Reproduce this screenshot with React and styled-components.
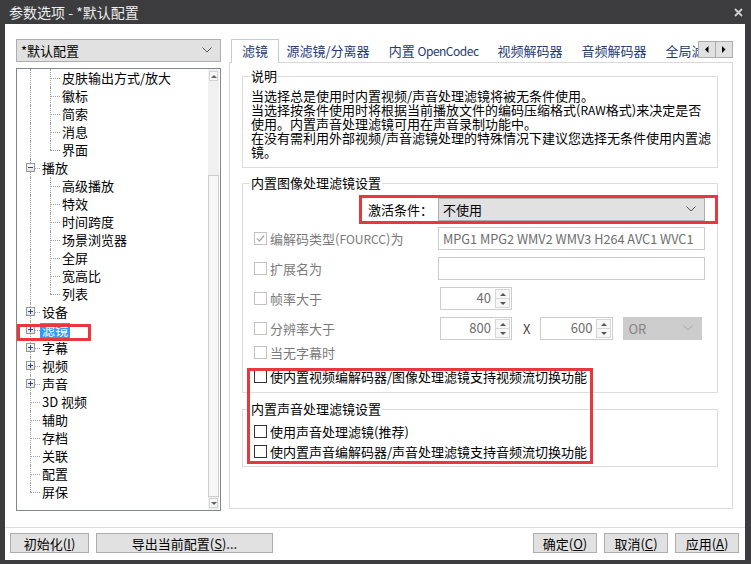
import React from "react";
import styled, { createGlobalStyle } from "styled-components";

const GlobalStyle = createGlobalStyle`
  * { box-sizing: border-box; }
  html, body { margin: 0; padding: 0; background: #3c3c3f; }
  body {
    font-family: "Noto Sans CJK SC", "Noto Sans", sans-serif;
    font-size: 13px;
    color: #000;
  }
`;

const RED = "#e8383d";

const Frame = styled.div`
  width: 751px;
  height: 564px;
  display: flex;
  flex-direction: column;
  background: #3c3c3f;
  padding: 0 6px 4px 5px;
`;

const TitleBar = styled.div`
  flex: none;
  height: 24px;
  margin: 0 -6px 0 -5px;
  padding: 0 8px 0 9px;
  display: flex;
  align-items: center;
  justify-content: space-between;
  color: #ededed;
  font-size: 14px;
  line-height: 22px;
`;

const Client = styled.div`
  flex: 1;
  display: flex;
  flex-direction: column;
  background: #fff;
`;

const Body = styled.div`
  height: 503px;
  flex: none;
  display: flex;
  padding: 15px 0 0 11px;
`;

const LeftPane = styled.div`
  width: 205px;
  flex: none;
  display: flex;
  flex-direction: column;
  gap: 6px;
`;

const Latin = styled.span`
  font-size: 12px;
  letter-spacing: ${(p) => (p.$tight ? "-0.5px" : "0")};
`;

const Select = styled.div`
  flex: none;
  width: ${(p) => (p.$w ? `${p.$w}px` : "auto")};
  height: 23px;
  display: flex;
  align-items: center;
  justify-content: space-between;
  padding: 0 8px 1px 4px;
  background: ${(p) => (p.$disabled ? "#cccccc" : "#e1e1e1")};
  border: 1px solid ${(p) => (p.$disabled ? "#cccccc" : "#adadad")};
  color: ${(p) => (p.$disabled ? "#838383" : "#000")};
  line-height: 19px;
  white-space: nowrap;
`;

/* tree */

const Tree = styled.div`
  position: relative;
  height: 443px;
  border: 1px solid #828790;
  display: flex;
  overflow: hidden;
`;

const TreeList = styled.div`
  flex: 1;
  padding-left: 3px;
`;

const TreeRow = styled.div`
  height: 18px;
  display: flex;
  align-items: center;
  white-space: nowrap;
`;

const Indent = styled.span`
  position: relative;
  flex: none;
  width: 20px;
  height: 18px;

  &::before {
    content: "";
    position: absolute;
    left: 10px;
    top: 0;
    height: ${(p) => (p.$v === "half" ? "9px" : "18px")};
    border-left: 1px dotted #a0a0a0;
  }

  &::after {
    content: "";
    display: ${(p) => (p.$h ? "block" : "none")};
    position: absolute;
    left: 10px;
    top: 9px;
    width: 10px;
    border-top: 1px dotted #a0a0a0;
  }
`;

const Toggle = styled.span`
  position: absolute;
  z-index: 1;
  left: 6px;
  top: 4px;
  width: 9px;
  height: 9px;
  border: 1px solid #979797;
  background: linear-gradient(#ffffff, #e2e2e2);
  display: flex;
  align-items: center;
  justify-content: center;
`;

const NodeLabel = styled.span`
  height: 15px;
  margin-top: 1px;
  line-height: 13px;
  padding: 0 2px;
  font-size: 13px;
  background: ${(p) => (p.$selected ? "#3399ff" : "transparent")};
  color: ${(p) => (p.$selected ? "#fff" : "#000")};
`;

const ScrollBar = styled.div`
  width: 11px;
  flex: none;
  margin-right: 1px;
  background: #f0f0f0;
  display: flex;
  flex-direction: column;
  padding: 2px 1px;
`;

const ScrollArrow = styled.div`
  height: 10px;
  flex: none;
  display: flex;
  align-items: center;
  justify-content: center;
  border: 1px solid #d2d2d2;
  background: #f6f6f6;
`;

const ScrollTrack = styled.div`
  flex: 1;
  display: flex;
  flex-direction: column;
  justify-content: flex-end;
`;

const ScrollThumb = styled.div`
  height: 322px;
  margin: 0 -1px 1px;
  border: 1px solid #cdcdcd;
  background: #f7f7f7;
`;

/* tabs */

const RightPane = styled.div`
  width: 504px;
  flex: none;
  margin-left: 8px;
  display: flex;
  flex-direction: column;
`;

const TabStrip = styled.div`
  height: 23px;
  display: flex;
  position: relative;
  z-index: 1;
`;

const TabList = styled.div`
  flex: 1;
  height: 24px;
  display: flex;
  align-items: flex-end;
  overflow: hidden;
  padding-left: 2px;
`;

const Tab = styled.div`
  flex: none;
  position: relative;
  z-index: ${(p) => (p.$active ? 1 : 0)};
  white-space: nowrap;
  color: #243a73;
  font-size: 13px;
  height: ${(p) => (p.$active ? "24px" : "21px")};
  line-height: ${(p) => (p.$active ? "21px" : "18px")};
  padding: ${(p) => (p.$active ? "0 10px" : "0 8.5px")};
  margin: ${(p) => (p.$active ? "0 -2px 0 0" : "0 0 1px 0")};
  background: ${(p) => (p.$active ? "#fff" : "transparent")};
  border: 1px solid ${(p) => (p.$active ? "#c2cadb" : "transparent")};
  border-bottom: none;
`;

const TabScroll = styled.div`
  flex: none;
  display: flex;
  margin-top: 2px;
  height: 17px;
`;

const TabScrollButton = styled.div`
  width: 18px;
  height: 17px;
  margin-left: ${(p) => (p.$first ? "0" : "-1px")};
  border: 1px solid #adadad;
  background: #e1e1e1;
  display: flex;
  align-items: center;
  justify-content: center;
`;

const TabPanel = styled.div`
  position: relative;
  height: 447px;
  border: 1px solid #d9d9d9;
  padding: 5px 14px 0 12px;
`;

/* groups */

const Group = styled.fieldset`
  margin: ${(p) => p.$mt || 0}px 0 0;
  padding: ${(p) => p.$pt}px 8px ${(p) => p.$pb}px;
  border: 1px solid #dcdcdc;
  min-width: 0;
`;

const GroupTitle = styled.legend`
  padding: 0 1px;
  margin-left: -1px;
  height: 17px;
  line-height: 16px;
`;

const NoteLine = styled.div`
  line-height: 14px;
  white-space: nowrap;
`;

const FieldRow = styled.div`
  display: flex;
  align-items: center;
  height: ${(p) => p.$h || 23}px;
  margin-top: ${(p) => p.$mt || 0}px;
`;

const CheckItem = styled.label`
  flex: none;
  display: flex;
  align-items: center;
  gap: 3px;
  padding-left: 3px;
  width: ${(p) => (p.$w ? `${p.$w}px` : "auto")};
  color: ${(p) => (p.$disabled ? "#7a7a7a" : "#000")};
  white-space: nowrap;
  line-height: 15px;
`;

const Box = styled.span`
  width: 13px;
  height: 13px;
  flex: none;
  border: 1px solid ${(p) => (p.$disabled ? "#c2c2c2" : "#333")};
  background: #fff;
  display: flex;
  align-items: center;
  justify-content: center;
`;

const TextField = styled.div`
  width: 267px;
  height: 23px;
  border: 1px solid #cccccc;
  padding: 0 4px;
  display: flex;
  align-items: center;
  color: #6d6d6d;
  white-space: nowrap;
  overflow: hidden;
  font-size: 12.7px;
`;

const Spin = styled.div`
  width: ${(p) => p.$w}px;
  height: 23px;
  margin-left: ${(p) => p.$ml || 0}px;
  border: 1px solid #cccccc;
  display: flex;
`;

const SpinValue = styled.span`
  flex: 1;
  text-align: right;
  padding-right: 4px;
  line-height: 20px;
  color: #6d6d6d;
`;

const SpinButtons = styled.div`
  width: 16px;
  display: flex;
  flex-direction: column;
  padding: 1px 1px 1px 0;
`;

const SpinButton = styled.span`
  flex: 1;
  margin-top: ${(p) => (p.$down ? "-1px" : "0")};
  border: 1px solid #d6d6d6;
  background: #f7f7f7;
  display: flex;
  align-items: center;
  justify-content: center;
`;

const Times = styled.span`
  margin: 0 10px 0 11px;
  color: #444;
`;

const ConditionBox = styled.div`
  height: 29px;
  margin: 1px -9px 0 108px;
  border: 3px solid ${RED};
  padding: 0 10px 0 6px;
  display: flex;
  align-items: center;
`;

const ConditionLabel = styled.span`
  flex: 1;
  white-space: nowrap;
  line-height: 19px;
  padding-bottom: 1px;
`;

const Highlight = styled.div`
  position: absolute;
  left: ${(p) => p.$x}px;
  top: ${(p) => p.$y}px;
  width: ${(p) => p.$w}px;
  height: ${(p) => p.$h}px;
  border: 3px solid ${RED};
  pointer-events: none;
  z-index: 2;
`;

/* footer */

const Footer = styled.div`
  flex: 1;
  border-top: 1px solid #dadada;
  display: flex;
  align-items: flex-start;
  gap: 7px;
  padding: 5px 6px 0 5px;
`;

const Button = styled.button`
  width: ${(p) => p.$w}px;
  height: 20px;
  margin-left: ${(p) => (p.$push ? "auto" : "0")};
  padding: 0;
  font: inherit;
  font-size: 13px;
  line-height: 17px;
  color: #000;
  background: #e1e1e1;
  border: 1px solid #adadad;
  border-radius: 0;
  white-space: nowrap;
`;

/* icons */

const Chevron = ({ color = "#555" }) => (
  <svg width="10" height="6" viewBox="0 0 10 6">
    <path d="M0.5 0.5L5 5L9.5 0.5" fill="none" stroke={color} strokeWidth="1" />
  </svg>
);

const CloseIcon = () => (
  <svg width="9" height="9" viewBox="0 0 9 9">
    <path d="M1 1L8 8M8 1L1 8" stroke="#d0d0d0" strokeWidth="1.8" />
  </svg>
);

const Triangle = ({ dir, color = "#000", size = 4 }) => {
  const d = {
    left: `M${size} 0L0 ${size}L${size} ${size * 2}Z`,
    right: `M0 0L${size} ${size}L0 ${size * 2}Z`,
    up: `M0 ${size}L${size} 0L${size * 2} ${size}Z`,
    down: `M0 0L${size} ${size}L${size * 2} 0Z`,
  }[dir];
  const horiz = dir === "left" || dir === "right";
  return (
    <svg width={horiz ? size : size * 2} height={horiz ? size * 2 : size}>
      <path d={d} fill={color} />
    </svg>
  );
};

const PlusMinus = ({ plus }) => (
  <svg width="7" height="7" viewBox="0 0 7 7">
    <path d={plus ? "M1 3.5H6M3.5 1V6" : "M1 3.5H6"} stroke="#26429a" strokeWidth="1" />
  </svg>
);

const CheckMark = ({ color }) => (
  <svg width="9" height="9" viewBox="0 0 9 9">
    <path d="M1 4.5L3.5 7L8 1.5" fill="none" stroke={color} strokeWidth="1.3" />
  </svg>
);

const CheckBox = ({ checked, disabled, children, width }) => (
  <CheckItem $disabled={disabled} $w={width}>
    <Box $disabled={disabled}>{checked && <CheckMark color={disabled ? "#a8a8a8" : "#000"} />}</Box>
    <span>{children}</span>
  </CheckItem>
);

const SpinBox = ({ value, width, ml }) => (
  <Spin $w={width} $ml={ml}>
    <SpinValue>{value}</SpinValue>
    <SpinButtons>
      <SpinButton>
        <Triangle dir="up" size={3} color="#555" />
      </SpinButton>
      <SpinButton $down>
        <Triangle dir="down" size={3} color="#555" />
      </SpinButton>
    </SpinButtons>
  </Spin>
);

const treeItems = [
  { label: "皮肤输出方式/放大", depth: 1 },
  { label: "徽标", depth: 1 },
  { label: "简索", depth: 1 },
  { label: "消息", depth: 1 },
  { label: "界面", depth: 1, last: true },
  { label: "播放", depth: 0, toggle: "-" },
  { label: "高级播放", depth: 1 },
  { label: "特效", depth: 1 },
  { label: "时间跨度", depth: 1 },
  { label: "场景浏览器", depth: 1 },
  { label: "全屏", depth: 1 },
  { label: "宽高比", depth: 1 },
  { label: "列表", depth: 1, last: true },
  { label: "设备", depth: 0, toggle: "+" },
  { label: "滤镜", depth: 0, toggle: "+", selected: true },
  { label: "字幕", depth: 0, toggle: "+" },
  { label: "视频", depth: 0, toggle: "+" },
  { label: "声音", depth: 0, toggle: "+" },
  { label: "3D 视频", depth: 0 },
  { label: "辅助", depth: 0 },
  { label: "存档", depth: 0 },
  { label: "关联", depth: 0 },
  { label: "配置", depth: 0 },
  { label: "屏保", depth: 0, last: true },
];

const tabs = [
  "滤镜",
  "源滤镜/分离器",
  <>
    内置 <Latin $tight>OpenCodec</Latin>
  </>,
  "视频解码器",
  "音频解码器",
  "全局滤镜",
];

const notes = [
  "当选择总是使用时内置视频/声音处理滤镜将被无条件使用。",
  <>
    当选择按条件使用时将根据当前播放文件的编码压缩格式(<Latin>RAW</Latin>格式)来决定是否
  </>,
  "使用。内置声音处理滤镜可用在声音录制功能中。",
  "在没有需利用外部视频/声音滤镜处理的特殊情况下建议您选择无条件使用内置滤",
  "镜。",
];

const LEFT_COL = 187;

export default function App() {
  return (
    <>
      <GlobalStyle />
      <Frame>
        <TitleBar>
          <span>参数选项 - *默认配置</span>
          <CloseIcon />
        </TitleBar>
        <Client>
          <Body>
            <LeftPane>
              <Select>
                <span>*默认配置</span>
                <Chevron />
              </Select>
              <Tree>
                <TreeList>
                  {treeItems.map((item) => (
                    <TreeRow key={item.label}>
                      <Indent $v={item.depth === 0 && item.last ? "half" : "full"} $h={item.depth === 0}>
                        {item.toggle && (
                          <Toggle>
                            <PlusMinus plus={item.toggle === "+"} />
                          </Toggle>
                        )}
                      </Indent>
                      {item.depth === 1 && <Indent $v={item.last ? "half" : "full"} $h />}
                      <NodeLabel $selected={item.selected}>{item.label}</NodeLabel>
                    </TreeRow>
                  ))}
                </TreeList>
                <ScrollBar>
                  <ScrollArrow>
                    <Triangle dir="up" size={3} color="#606060" />
                  </ScrollArrow>
                  <ScrollTrack>
                    <ScrollThumb />
                  </ScrollTrack>
                  <ScrollArrow>
                    <Triangle dir="down" size={3} color="#606060" />
                  </ScrollArrow>
                </ScrollBar>
                <Highlight $x={0} $y={255} $w={74} $h={17} />
              </Tree>
            </LeftPane>

            <RightPane>
              <TabStrip>
                <TabList>
                  {tabs.map((t, i) => (
                    <Tab key={i} $active={i === 0}>
                      {t}
                    </Tab>
                  ))}
                </TabList>
                <TabScroll>
                  <TabScrollButton $first>
                    <Triangle dir="left" size={3.5} />
                  </TabScrollButton>
                  <TabScrollButton>
                    <Triangle dir="right" size={3.5} />
                  </TabScrollButton>
                </TabScroll>
              </TabStrip>

              <TabPanel>
                <Group $pt={4} $pb={8}>
                  <GroupTitle>说明</GroupTitle>
                  {notes.map((n, i) => (
                    <NoteLine key={i}>{n}</NoteLine>
                  ))}
                </Group>

                <Group $mt={7} $pt={2} $pb={8}>
                  <GroupTitle>内置图像处理滤镜设置</GroupTitle>
                  <ConditionBox>
                    <ConditionLabel>激活条件：</ConditionLabel>
                    <Select $w={267}>
                      <span>不使用</span>
                      <Chevron />
                    </Select>
                  </ConditionBox>
                  <FieldRow $mt={3}>
                    <CheckBox checked disabled width={LEFT_COL}>
                      编解码类型(<Latin>FOURCC</Latin>)为
                    </CheckBox>
                    <TextField>MPG1 MPG2 WMV2 WMV3 H264 AVC1 WVC1</TextField>
                  </FieldRow>
                  <FieldRow $mt={7}>
                    <CheckBox disabled width={LEFT_COL}>
                      扩展名为
                    </CheckBox>
                    <TextField />
                  </FieldRow>
                  <FieldRow $mt={7}>
                    <CheckBox disabled width={LEFT_COL}>
                      帧率大于
                    </CheckBox>
                    <SpinBox value="40" width={72} ml={2} />
                  </FieldRow>
                  <FieldRow $mt={7}>
                    <CheckBox disabled width={LEFT_COL}>
                      分辨率大于
                    </CheckBox>
                    <SpinBox value="800" width={72} ml={2} />
                    <Times>X</Times>
                    <SpinBox value="600" width={73} />
                    <Select $w={79} $disabled style={{ marginLeft: 10 }}>
                      <span>OR</span>
                      <Chevron color="#a8a8a8" />
                    </Select>
                  </FieldRow>
                  <FieldRow $mt={4} $h={16}>
                    <CheckBox disabled>当无字幕时</CheckBox>
                  </FieldRow>
                  <FieldRow $mt={8} $h={16}>
                    <CheckBox>使内置视频编解码器/图像处理滤镜支持视频流切换功能</CheckBox>
                  </FieldRow>
                </Group>

                <Group $mt={8} $pt={3} $pb={5}>
                  <GroupTitle>内置声音处理滤镜设置</GroupTitle>
                  <FieldRow $h={20}>
                    <CheckBox>使用声音处理滤镜(推荐)</CheckBox>
                  </FieldRow>
                  <FieldRow $h={20}>
                    <CheckBox>使内置声音编解码器/声音处理滤镜支持音频流切换功能</CheckBox>
                  </FieldRow>
                </Group>

                <Highlight $x={17} $y={305} $w={346} $h={96} />
              </TabPanel>
            </RightPane>
          </Body>

          <Footer>
            <Button $w={79}>
              初始化(<u>I</u>)
            </Button>
            <Button $w={177}>
              导出当前配置(<u>S</u>)...
            </Button>
            <Button $w={64} $push>
              确定(<u>O</u>)
            </Button>
            <Button $w={64}>
              取消(<u>C</u>)
            </Button>
            <Button $w={64}>
              应用(<u>A</u>)
            </Button>
          </Footer>
        </Client>
      </Frame>
    </>
  );
}
